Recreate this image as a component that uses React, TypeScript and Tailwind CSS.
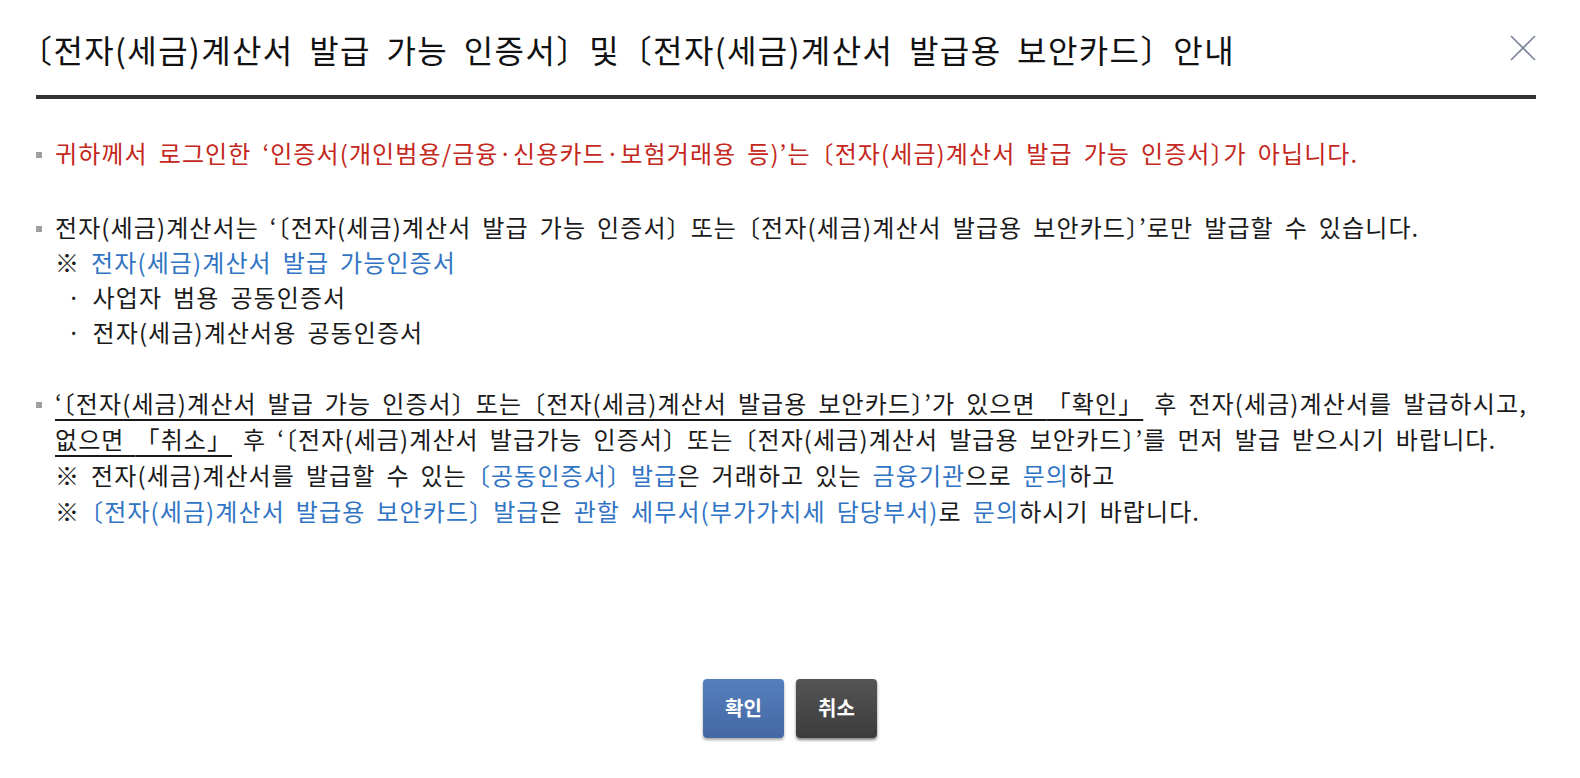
import React from 'react';

const Blue = ({ children }: { children: React.ReactNode }) => (
    <span className="text-[#3174c4]">{children}</span>
);

// full-width corner brackets keep their normal width
const Q = ({ children }: { children: React.ReactNode }) => (
    <span className="[font-feature-settings:normal]">{children}</span>
);

const Bullet = () => <span className="absolute left-0 top-[17px] w-[6px] h-[6px] bg-[#a0a0a0]" />;

const App = () => {
    return (
        <div
            className="min-h-screen bg-white text-[#1a1a1a] [font-feature-settings:'halt']"
            style={{ fontFamily: '"Noto Sans CJK KR", "Noto Sans", sans-serif' }}
        >
            {/* header */}
            <div className="ml-[36px] mr-[44px] pt-[25px] flex items-start justify-between border-b-[4px] border-[#333] pb-[22px]">
                <h1 className="text-[32px] leading-[48px] font-normal text-[#111] tracking-[1.4px] [word-spacing:7px] whitespace-nowrap">
                    〔전자(세금)계산서 발급 가능 인증서〕 및 〔전자(세금)계산서 발급용 보안카드〕 안내
                </h1>
                <button className="mt-[10px] w-[26px] h-[26px] text-[#7b8598]">
                    <svg viewBox="0 0 26 26" className="w-[26px] h-[26px]" fill="none" stroke="currentColor" strokeWidth="1.6">
                        <path d="M1 1 L25 25 M25 1 L1 25" />
                    </svg>
                </button>
            </div>

            {/* body */}
            <div className="ml-[36px] mr-[44px] pt-[36px] text-[24px] leading-[35.5px] tracking-[1.1px] [word-spacing:4.5px]">
                <div className="relative pl-[19px] text-[#c42720]">
                    <Bullet />
                    귀하께서 로그인한 ‘인증서(개인범용/금융·신용카드·보험거래용 등)’는 〔전자(세금)계산서 발급 가능 인증서〕가 아닙니다.
                </div>

                <div className="relative pl-[19px] mt-[38px] leading-[35px]">
                    <Bullet />
                    <div>
                        전자(세금)계산서는 ‘〔전자(세금)계산서 발급 가능 인증서〕 또는 〔전자(세금)계산서 발급용 보안카드〕’로만 발급할 수 있습니다.
                    </div>
                    <div>
                        ※ <Blue>전자(세금)계산서 발급 가능인증서</Blue>
                    </div>
                    <div className="pl-[12px]">· 사업자 범용 공동인증서</div>
                    <div className="pl-[12px]">· 전자(세금)계산서용 공동인증서</div>
                </div>

                <div className="relative pl-[19px] mt-[36px] leading-[36px] whitespace-nowrap">
                    <Bullet />
                    <div>
                        <span className="underline underline-offset-[6px] decoration-[1.5px]">
                            ‘〔전자(세금)계산서 발급 가능 인증서〕 또는 〔전자(세금)계산서 발급용 보안카드〕’가 있으면 <Q>「확인」</Q>
                        </span>{' '}
                        후 전자(세금)계산서를 발급하시고,
                    </div>
                    <div>
                        <span className="underline underline-offset-[6px] decoration-[1.5px]">
                            없으면 <Q>「취소」</Q>
                        </span>{' '}
                        후 ‘〔전자(세금)계산서 발급가능 인증서〕 또는 〔전자(세금)계산서 발급용 보안카드〕’를 먼저 발급 받으시기 바랍니다.
                    </div>
                    <div>
                        ※ 전자(세금)계산서를 발급할 수 있는 <Blue>〔공동인증서〕 발급</Blue>은 거래하고 있는{' '}
                        <Blue>금융기관</Blue>으로 <Blue>문의</Blue>하고
                    </div>
                    <div>
                        ※ <Blue>〔전자(세금)계산서 발급용 보안카드〕 발급</Blue>은{' '}
                        <Blue>관할 세무서(부가가치세 담당부서)</Blue>로 <Blue>문의</Blue>하시기 바랍니다.
                    </div>
                </div>
            </div>

            {/* buttons */}
            <div className="flex justify-center gap-[12px] mt-[150px]">
                <button className="w-[81px] h-[59px] rounded-[4px] bg-gradient-to-b from-[#5580bd] to-[#4468a3] text-white text-[20px] font-bold shadow-[0_2px_3px_rgba(0,0,0,0.35)]">
                    확인
                </button>
                <button className="w-[81px] h-[59px] rounded-[4px] bg-gradient-to-b from-[#555] to-[#3c3c3c] text-white text-[20px] font-bold shadow-[0_2px_3px_rgba(0,0,0,0.5)]">
                    취소
                </button>
            </div>
        </div>
    );
};

export default App;
